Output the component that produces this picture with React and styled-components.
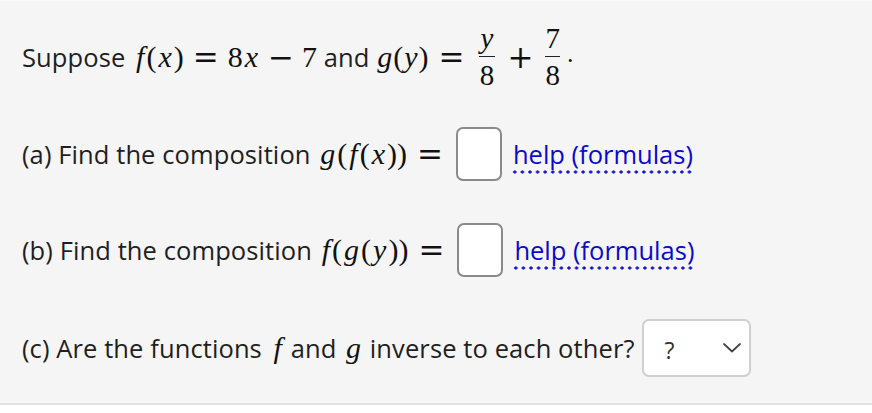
import React from "react";
import styled, { createGlobalStyle } from "styled-components";

const GlobalStyle = createGlobalStyle`
  html, body { margin: 0; padding: 0; background: #ffffff; }
  body { font-family: "Open Sans", "Noto Sans", sans-serif; color: #1f1f1f; }
`;

const Panel = styled.div`
  box-sizing: border-box;
  height: 405px;
  background: #f5f5f5;
  border-top: 1px solid #fafafa;
  border-bottom: 2px solid #e3e3e3;
  padding: 24px 22px 0;
`;

const Row = styled.div`
  display: flex;
  align-items: center;
  margin-top: ${(p) => p.$mt || 0}px;
  height: ${(p) => p.$h}px;
  white-space: pre;
`;

const Text = styled.span`
  font-family: "Open Sans", "Noto Sans", sans-serif;
  font-size: 25.5px;
  letter-spacing: 0.1px;
  color: #1f1f1f;
`;

const MathWrap = styled.span`
  display: inline-flex;
  align-items: center;
  font-family: "Liberation Serif", "Times New Roman", serif;
  font-size: 30px;
  color: #111;
  margin: 0 ${(p) => p.$mr || 0}px 0 ${(p) => p.$ml || 0}px;
`;

const V = styled.span`
  font-style: italic;
  padding: 0 ${(p) => p.$pad ?? 2}px;
`;

const P = styled.span`
  padding: 0;
`;

const N = styled.span``;

const Op = styled.span`
  font-family: "DejaVu Serif", serif;
  font-size: 31px;
  font-weight: 300;
  line-height: 1;
  margin: 0 ${(p) => p.$sp}px 0 ${(p) => p.$spl ?? p.$sp}px;
`;

const Frac = styled.span`
  display: inline-flex;
  flex-direction: column;
  align-items: center;
  font-size: 29px;
  line-height: 27px;
  padding: 0 4px;
`;

const Bar = styled.span`
  align-self: stretch;
  height: 1.5px;
  background: #222;
  margin: 4px 0 5px;
`;

const Dot = styled.span`
  align-self: flex-end;
  margin-left: 3px;
  margin-bottom: 20px;
  font-size: 26px;
`;

const AnswerBox = styled.span`
  box-sizing: border-box;
  display: inline-block;
  width: 46px;
  height: 54px;
  background: #ffffff;
  border: 2px solid #8a8a8a;
  border-radius: 7px;
  margin-left: 13px;
`;

const HelpLink = styled.a`
  font-family: "Open Sans", "Noto Sans", sans-serif;
  font-size: 25.5px;
  color: #0a0acb;
  text-decoration: none;
  margin-left: 9px;
  padding: 0 2px 3px;
  margin-top: 3px;
  background-image: radial-gradient(circle, #1515c8 1.4px, transparent 1.8px);
  background-size: 7.6px 4px;
  background-repeat: repeat-x;
  background-position: 0 100%;
  cursor: pointer;
`;

const Select = styled.div`
  box-sizing: border-box;
  width: 109px;
  height: 58px;
  margin-left: 7px;
  background: #ffffff;
  border: 2px solid #d0d0d0;
  border-radius: 7px;
  display: flex;
  align-items: center;
  justify-content: space-between;
  padding: 0 7px 0 21px;
`;

const SelectValue = styled.span`
  font-family: "Open Sans", "Noto Sans", sans-serif;
  font-size: 23px;
  color: #333;
  margin-top: 4px;
`;

const Chevron = () => (
  <svg width="20" height="12" viewBox="0 0 20 12" fill="none">
    <path d="M2 2 L10 9.5 L18 2" stroke="#444" strokeWidth="1.8" strokeLinecap="round" strokeLinejoin="round" />
  </svg>
);

export default function App() {
  return (
    <>
      <GlobalStyle />
      <Panel>
        <Row $h={64}>
          <Text>Suppose </Text>
          <MathWrap $ml={2}>
            <V>f</V><P>(</P><V>x</V><P>)</P>
            <Op $sp={9}>=</Op>
            <N>8</N><V>x</V>
            <Op $sp={8}>−</Op>
            <N>7</N>
          </MathWrap>
          <Text> and </Text>
          <MathWrap $ml={0}>
            <V $pad={1}>g</V><P>(</P><V $pad={1}>y</V><P>)</P>
            <Op $sp={10}>=</Op>
            <Frac>
              <V>y</V>
              <Bar />
              <N>8</N>
            </Frac>
            <Op $sp={8}>+</Op>
            <Frac>
              <N>7</N>
              <Bar />
              <N>8</N>
            </Frac>
            <Dot>.</Dot>
          </MathWrap>
        </Row>

        <Row $h={54} $mt={38}>
          <Text>(a) Find the composition </Text>
          <MathWrap $ml={1}>
            <V>g</V><P>(</P><V>f</V><P>(</P><V>x</V><P>)</P><P>)</P>
            <Op $sp={0} $spl={10}>=</Op>
          </MathWrap>
          <AnswerBox />
          <HelpLink>help (formulas)</HelpLink>
        </Row>

        <Row $h={54} $mt={42}>
          <Text>(b) Find the composition </Text>
          <MathWrap $ml={1}>
            <V>f</V><P>(</P><V>g</V><P>(</P><V>y</V><P>)</P><P>)</P>
            <Op $sp={0} $spl={10}>=</Op>
          </MathWrap>
          <AnswerBox />
          <HelpLink>help (formulas)</HelpLink>
        </Row>

        <Row $h={58} $mt={42}>
          <Text>(c) Are the functions </Text>
          <MathWrap $ml={3}><V>f</V></MathWrap>
          <Text> and </Text>
          <MathWrap $ml={1}><V>g</V></MathWrap>
          <Text> inverse to each other?</Text>
          <Select>
            <SelectValue>?</SelectValue>
            <Chevron />
          </Select>
        </Row>
      </Panel>
    </>
  );
}
